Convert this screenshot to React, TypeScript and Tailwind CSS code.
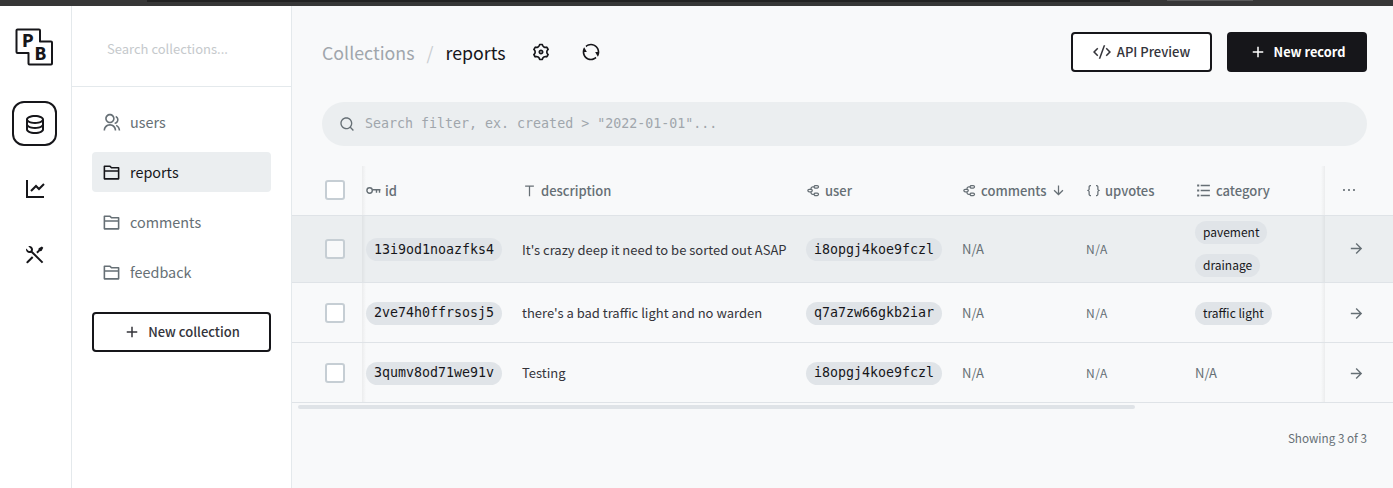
import React from "react";
import {
  RiDatabase2Line, RiLineChartLine, RiToolsLine, RiGroupLine, RiFolder2Line, RiAddLine,
  RiSettings3Line, RiRefreshLine, RiCodeSSlashLine, RiSearchLine, RiText, RiMindMap,
  RiBracesLine, RiListCheck, RiArrowDownLine, RiArrowRightLine, RiMoreLine,
} from "react-icons/ri";

const sans = { fontFamily: '"Noto Sans CJK SC", "Source Sans Pro", "Noto Sans", sans-serif' };

function Logo() {
  return (
    <svg width="38" height="38" viewBox="0 0 38 38" fill="none" className="text-[#16161a]">
      <path d="M1.500 2.500a1 1 0 0 1 1-1H24a1 1 0 0 1 1 1V13.500H36a1 1 0 0 1 1 1V35.500a1 1 0 0 1-1 1H14.500a1 1 0 0 1-1-1V25H2.500a1 1 0 0 1-1-1Z" stroke="currentColor" strokeWidth="2" strokeLinejoin="round" />
      <text x="7" y="19" fontSize="17" fontWeight="800" fill="currentColor" fontFamily='"Noto Sans CJK SC", sans-serif'>P</text>
      <text x="19.500" y="32" fontSize="17" fontWeight="800" fill="currentColor" fontFamily='"Noto Sans CJK SC", sans-serif'>B</text>
    </svg>
  );
}

function Key() {
  return (
    <svg width="15" height="15" viewBox="0 0 15 15" fill="none" stroke="#666f75" strokeWidth="1.400">
      <circle cx="3.600" cy="7.500" r="2.700" />
      <path d="M6.300 6.800H14.500M10.500 6.800v3M13.500 6.800v3" />
    </svg>
  );
}

function Pill({ children, mono, className = "" }: { children: React.ReactNode; mono?: boolean; className?: string }) {
  return (
    <span
      className={`inline-flex h-[23px] items-center rounded-full bg-[#e0e4e8] px-2 text-[#16161a] ${mono ? "font-['DejaVu_Sans_Mono',monospace] text-[13.300px]" : "text-[12px]"} ${className}`}
    >
      {children}
    </span>
  );
}

function NavItem({ icon, label, active }: { icon: React.ReactNode; label: string; active?: boolean }) {
  return (
    <div className={`flex h-10 items-center gap-[9px] rounded pl-[10px] text-[14.400px] ${active ? "bg-[#ebeef0] text-[#16161a]" : "text-[#666f75]"}`}>
      <span className="flex w-[19px] items-center justify-center text-[19px]">{icon}</span>
      <span>{label}</span>
    </div>
  );
}

function Head({ icon, label, extra }: { icon: React.ReactNode; label: string; extra?: React.ReactNode }) {
  return (
    <span className="flex items-center gap-[4px] text-[13px] font-medium text-[#666f75]">
      {icon}
      <span>{label}</span>
      {extra}
    </span>
  );
}

const Shadow = ({ side }: { side: "l" | "r" }) =>
  side === "r" ? (
    <span className="absolute top-0 bottom-0 -right-[2px] w-1 bg-gradient-to-r from-black/[0.05] to-transparent" />
  ) : (
    <span className="absolute top-0 bottom-0 left-0 w-1 bg-gradient-to-l from-black/[0.05] to-transparent" />
  );

function Check({ light }: { light?: boolean }) {
  return <span className={`block h-5 w-5 rounded-[3px] border-2 border-[#c6ced4] ${light ? "bg-[#f8f9fa]" : "bg-white"}`} />;
}

const NA = ({ mono }: { mono?: boolean }) => (
  <span className={`text-[#666f75] ${mono ? "text-[12px] tracking-[0.6px]" : "text-[13px]"}`}>N/A</span>
);

type Row = { id: string; desc: string; user: string; cats: string[]; hover?: boolean; h: string };
const rows: Row[] = [
  { id: "13i9od1noazfks4", desc: "It's crazy deep it need to be sorted out ASAP", user: "i8opgj4koe9fczl", cats: ["pavement", "drainage"], hover: true, h: "h-[67px]" },
  { id: "2ve74h0ffrsosj5", desc: "there's a bad traffic light and no warden", user: "q7a7zw66gkb2iar", cats: ["traffic light"], h: "h-[60px]" },
  { id: "3qumv8od71we91v", desc: "Testing", user: "i8opgj4koe9fczl", cats: [], h: "h-[60px]" },
];

export default function App() {
  return (
    <div style={sans} className="flex h-[488px] w-[1393px] flex-col overflow-hidden bg-white text-[13px] text-[#16161a]">
      <div className="flex h-[6px] shrink-0 items-start bg-[#373737]">
        <div className="ml-[147px] h-[2px] w-[983px] bg-[#222222]" />
        <div className="ml-[37px] h-px w-[86px] bg-[#5a5a5a]" />
      </div>
      <div className="flex min-h-0 flex-1">
        {/* rail */}
        <aside className="flex w-[72px] shrink-0 flex-col items-start border-r border-[#e4e9ec] pt-[22px]">
          <div className="ml-[15px]"><Logo /></div>
          <div className="mt-[35px] ml-3 flex h-[45px] w-[45px] items-center justify-center rounded-xl border-2 border-[#16161a] text-[24px]">
            <RiDatabase2Line />
          </div>
          <div className="mt-5 ml-3 flex h-[45px] w-[45px] items-center justify-center text-[24px]"><RiLineChartLine /></div>
          <div className="mt-[21px] ml-3 flex h-[45px] w-[45px] items-center justify-center text-[24px]"><RiToolsLine /></div>
        </aside>

        {/* collections */}
        <aside className="flex w-[220px] shrink-0 flex-col border-r border-[#e4e9ec]">
          <div className="flex h-[81px] shrink-0 items-center border-b border-[#e4e9ec] pt-[5px] pl-[35px] text-[13px] text-[#c5c9cc]">
            Search collections...
          </div>
          <nav className="flex flex-col gap-[10px] px-5 pt-[15px]">
            <NavItem icon={<RiGroupLine />} label="users" />
            <NavItem icon={<RiFolder2Line />} label="reports" active />
            <NavItem icon={<RiFolder2Line />} label="comments" />
            <NavItem icon={<RiFolder2Line />} label="feedback" />
            <button className="mt-[10px] flex h-10 items-center justify-center gap-[7px] rounded border-2 border-[#16161a] text-[13px] font-medium text-[#34343a]">
              <RiAddLine className="text-[18px]" />
              New collection
            </button>
          </nav>
        </aside>

        {/* main */}
        <main className="flex min-w-0 flex-1 flex-col bg-[#f8f9fa]">
          <header className="flex items-center pt-[26px] pr-[26px] pl-[30px]">
            <div className="flex items-center text-[17.800px] leading-10">
              <span className="text-[#a0a6ac]">Collections</span>
              <span className="mx-[12px] text-[#c9cdd1]">/</span>
              <span>reports</span>
            </div>
            <RiSettings3Line className="ml-[25px] text-[20px]" />
            <RiRefreshLine className="ml-[30px] text-[20px]" />
            <div className="ml-auto flex gap-[15px]">
              <button className="flex h-10 w-[141px] items-center justify-center gap-[6px] rounded border-2 border-[#16161a] bg-white text-[13px] font-medium text-[#34343a]">
                <RiCodeSSlashLine className="text-[18px]" />
                API Preview
              </button>
              <button className="flex h-10 w-[140px] items-center justify-center gap-[7px] rounded bg-[#16161a] text-[12.800px] font-bold text-white">
                <RiAddLine className="text-[18px]" />
                New record
              </button>
            </div>
          </header>

          <div className="mt-[30px] mr-[26px] ml-[30px] flex h-[44px] items-center rounded-full bg-[#ebeef0] pl-[17px] font-['DejaVu_Sans_Mono',monospace] text-[13.300px] text-[#a0a6ac]">
            <RiSearchLine className="mr-[10px] text-[16px] text-[#666f75]" />
            <span>Search filter, ex. created &gt; "2022-01-01"...</span>
          </div>

          <table className="mt-5 w-[1101px] table-fixed border-collapse">
            <colgroup>
              <col className="w-[72px]" />
              <col className="w-[156px]" />
              <col className="w-[284px]" />
              <col className="w-[156px]" />
              <col className="w-[124px]" />
              <col className="w-[109px]" />
              <col className="w-[128px]" />
              <col className="w-[72px]" />
            </colgroup>
            <thead>
              <tr className="h-[49px] border-b border-[#dfe3e7] text-left">
                <th className="relative pl-[33px] font-normal"><Check /><Shadow side="r" /></th>
                <th className="pl-[2px] font-normal"><Head icon={<Key />} label="id" /></th>
                <th className="pl-[2px] font-normal"><Head icon={<RiText className="text-[15px]" />} label="description" /></th>
                <th className="pl-[2px] font-normal"><Head icon={<RiMindMap className="text-[15px]" />} label="user" /></th>
                <th className="pl-[2px] font-normal"><Head icon={<RiMindMap className="text-[15px]" />} label="comments" extra={<RiArrowDownLine className="ml-0 text-[15px]" />} /></th>
                <th className="pl-[2px] font-normal"><Head icon={<RiBracesLine className="text-[15px]" />} label="upvotes" /></th>
                <th className="pl-[2px] font-normal"><Head icon={<RiListCheck className="text-[17px]" />} label="category" /></th>
                <th className="relative pl-[20px] font-normal text-[#666f75]"><RiMoreLine className="text-[16px]" /><Shadow side="l" /></th>
              </tr>
            </thead>
            <tbody>
              {rows.map((r) => {
                const nudge = r.hover ? "" : "pt-[2px]";
                return (
                  <tr key={r.id} className={`${r.h} border-b border-[#dfe3e7] ${r.hover ? "bg-[#ebeef0]" : ""}`}>
                    <td className={`relative pl-[33px] ${nudge}`}><Check light={r.hover} /><Shadow side="r" /></td>
                    <td className="pt-[2px] pl-[2px]"><Pill mono>{r.id}</Pill></td>
                    <td className="pt-[2px] pl-[2px] text-[13px] text-[#34343a]">{r.desc}</td>
                    <td className="pt-[2px] pl-[2px]"><Pill mono>{r.user}</Pill></td>
                    <td className={`pl-[2px] ${nudge}`}><NA /></td>
                    <td className={`pl-[2px] ${nudge}`}><NA mono /></td>
                    <td className={`pl-[2px] ${nudge}`}>
                      {r.cats.length ? (
                        <div className="flex flex-col items-start gap-[10px]">
                          {r.cats.map((c) => <Pill key={c}>{c}</Pill>)}
                        </div>
                      ) : <NA />}
                    </td>
                    <td className={`relative pl-[27px] text-[#666f75] ${nudge}`}><RiArrowRightLine className="text-[17px]" /><Shadow side="l" /></td>
                  </tr>
                );
              })}
            </tbody>
          </table>

          <div className="mt-[2px] ml-[6px] h-1 w-[837px] rounded-full bg-[#dfe3e7]" />

          <div className="mt-5 pr-[26px] text-right text-[11.700px] text-[#666f75]">Showing 3 of 3</div>
        </main>
      </div>
    </div>
  );
}
